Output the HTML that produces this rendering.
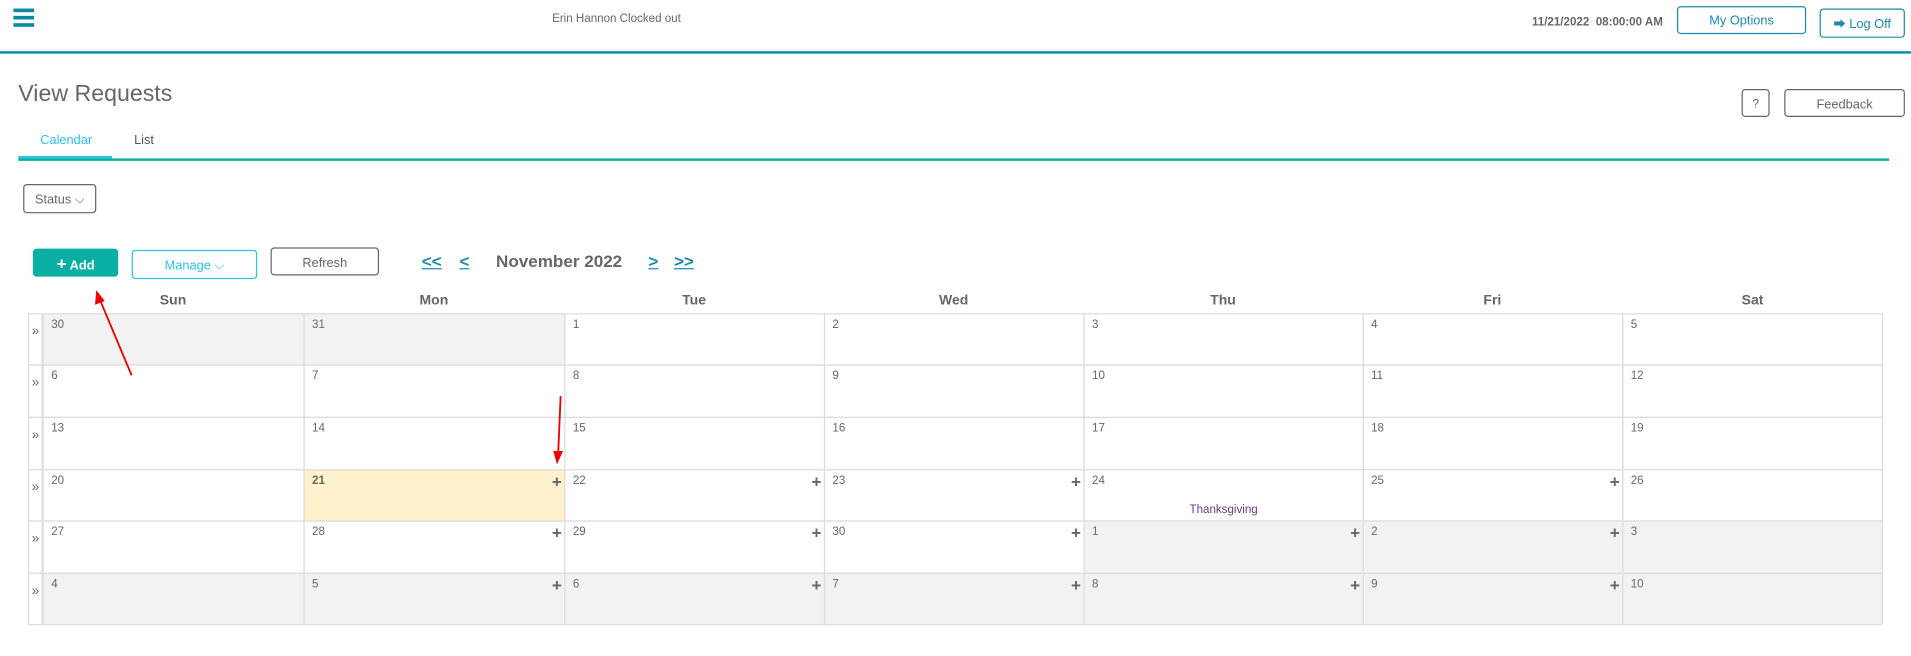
<!DOCTYPE html>
<html><head><meta charset="utf-8"><style>
html,body{margin:0;padding:0;background:#fff;overflow:hidden;width:1911px;height:656px}
#w{position:absolute;left:0;top:0;width:1568px;height:538px;transform:scale(1.21875);transform-origin:0 0;font-family:"Liberation Sans Narrow","Liberation Sans",sans-serif;color:#666}
.a{position:absolute}
.btn{position:absolute;box-sizing:border-box;border:1px solid #666;border-radius:3px;text-align:center;font-size:10.5px}
.c{position:absolute;box-sizing:border-box;border:1px solid #ddd;font-size:9.5px;color:#666;padding:3px 0 0 6px}
.g{background:#f2f2f2}
.p{position:absolute;right:2px;top:2px;font-weight:bold;font-size:14px;color:#666;line-height:14px}
.h{position:absolute;top:241px;font-weight:bold;font-size:11.5px;color:#666;text-align:center}
.r{position:absolute;left:23px;width:12px;box-sizing:border-box;border:1px solid #ddd;font-size:11px;padding-left:2px;color:#666}
.nav{position:absolute;top:206px;color:#1a8ab0;font-size:14px;font-weight:bold;text-decoration:underline}
</style></head><body><div id="w">
<div class="a" style="left:11px;top:7px;width:17px;height:2.5px;background:#0a8aa8"></div>
<div class="a" style="left:11px;top:13px;width:17px;height:2.5px;background:#0a8aa8"></div>
<div class="a" style="left:11px;top:19px;width:17px;height:2.5px;background:#0a8aa8"></div>
<div class="a" style="left:453px;top:10px;font-size:9.5px">Erin Hannon Clocked out</div>
<div class="a" style="left:1257px;top:13px;font-size:9.5px;font-weight:bold">11/21/2022&nbsp; 08:00:00 AM</div>
<div class="btn" style="left:1376px;top:5px;width:106px;height:23px;border-color:#1a8ab0;color:#1a8ab0;line-height:23px">My Options</div>
<div class="btn" style="left:1493px;top:7px;width:70px;height:24px;border-color:#1a8ab0;color:#1a8ab0;line-height:24px"><span style="font-size:10px">&#x2B95;</span> Log Off</div>
<div class="a" style="left:0;top:42px;width:1568px;height:2px;background:#0a8aa8"></div>
<div class="a" style="left:15px;top:67px;font-size:19px;color:#666">View Requests</div>
<div class="btn" style="left:1429px;top:73px;width:23px;height:23px;line-height:23px;font-size:10px">?</div>
<div class="btn" style="left:1464px;top:73px;width:99px;height:23px;line-height:25px">Feedback</div>
<div class="a" style="left:33px;top:109px;font-size:10.5px;color:#2bc4e8">Calendar</div>
<div class="a" style="left:110px;top:109px;font-size:10.5px;color:#555">List</div>
<div class="a" style="left:15px;top:128px;width:77px;height:2px;background:#2bc4e8"></div>
<div class="a" style="left:15px;top:130px;width:1535px;height:2px;background:#0aafa3"></div>
<div class="btn" style="left:19px;top:151px;width:60px;height:24px;line-height:24px;font-size:10.5px">Status &#x2335;</div>
<div class="btn" style="left:27px;top:204px;width:70px;height:23px;line-height:23px;background:#0aafa3;border-color:#0aafa3;color:#fff;font-weight:bold"><span style="font-size:14px">+</span> Add</div>
<div class="btn" style="left:108px;top:205px;width:103px;height:24px;line-height:25px;border-color:#2bc4e8;color:#2bc4e8">Manage &#x2335;</div>
<div class="btn" style="left:222px;top:203px;width:89px;height:23px;line-height:24px">Refresh</div>
<div class="nav" style="left:346px">&lt;&lt;</div>
<div class="nav" style="left:377px">&lt;</div>
<div class="a" style="left:407px;top:206px;font-size:14px;font-weight:bold;color:#666">November 2022</div>
<div class="nav" style="left:532px">&gt;</div>
<div class="nav" style="left:553px">&gt;&gt;</div>
<div class="h" style="left:35px;width:214px">Sun</div><div class="h" style="left:249px;width:214px">Mon</div><div class="h" style="left:463px;width:213px">Tue</div><div class="h" style="left:676px;width:213px">Wed</div><div class="h" style="left:889px;width:229px">Thu</div><div class="h" style="left:1118px;width:213px">Fri</div><div class="h" style="left:1331px;width:214px">Sat</div>

<div class="r" style="top:257px;height:43px;padding-top:8px">»</div>
<div class="r" style="top:299px;height:44px;padding-top:8px">»</div>
<div class="r" style="top:342px;height:44px;padding-top:8px">»</div>
<div class="r" style="top:385px;height:43px;padding-top:8px">»</div>
<div class="r" style="top:427px;height:44px;padding-top:8px">»</div>
<div class="r" style="top:470px;height:43px;padding-top:8px">»</div>

<div class="c g" style="left:35px;top:257px;width:215px;height:43px">30</div>
<div class="c g" style="left:249px;top:257px;width:215px;height:43px">31</div>
<div class="c" style="left:463px;top:257px;width:214px;height:43px">1</div>
<div class="c" style="left:676px;top:257px;width:214px;height:43px">2</div>
<div class="c" style="left:889px;top:257px;width:230px;height:43px">3</div>
<div class="c" style="left:1118px;top:257px;width:214px;height:43px">4</div>
<div class="c" style="left:1331px;top:257px;width:214px;height:43px">5</div>

<div class="c" style="left:35px;top:299px;width:215px;height:44px">6</div>
<div class="c" style="left:249px;top:299px;width:215px;height:44px">7</div>
<div class="c" style="left:463px;top:299px;width:214px;height:44px">8</div>
<div class="c" style="left:676px;top:299px;width:214px;height:44px">9</div>
<div class="c" style="left:889px;top:299px;width:230px;height:44px">10</div>
<div class="c" style="left:1118px;top:299px;width:214px;height:44px">11</div>
<div class="c" style="left:1331px;top:299px;width:214px;height:44px">12</div>

<div class="c" style="left:35px;top:342px;width:215px;height:44px">13</div>
<div class="c" style="left:249px;top:342px;width:215px;height:44px">14</div>
<div class="c" style="left:463px;top:342px;width:214px;height:44px">15</div>
<div class="c" style="left:676px;top:342px;width:214px;height:44px">16</div>
<div class="c" style="left:889px;top:342px;width:230px;height:44px">17</div>
<div class="c" style="left:1118px;top:342px;width:214px;height:44px">18</div>
<div class="c" style="left:1331px;top:342px;width:214px;height:44px">19</div>

<div class="c" style="left:35px;top:385px;width:215px;height:43px">20</div>
<div class="c" style="left:249px;top:385px;width:215px;height:43px;background:#fdf2cc;font-weight:bold">21<span class="p">+</span></div>
<div class="c" style="left:463px;top:385px;width:214px;height:43px">22<span class="p">+</span></div>
<div class="c" style="left:676px;top:385px;width:214px;height:43px">23<span class="p">+</span></div>
<div class="c" style="left:889px;top:385px;width:230px;height:43px">24<div style="position:absolute;left:0;width:228px;top:27px;text-align:center;color:#6a3a8a">Thanksgiving</div></div>
<div class="c" style="left:1118px;top:385px;width:214px;height:43px">25<span class="p">+</span></div>
<div class="c" style="left:1331px;top:385px;width:214px;height:43px">26</div>

<div class="c" style="left:35px;top:427px;width:215px;height:44px">27</div>
<div class="c" style="left:249px;top:427px;width:215px;height:44px">28<span class="p">+</span></div>
<div class="c" style="left:463px;top:427px;width:214px;height:44px">29<span class="p">+</span></div>
<div class="c" style="left:676px;top:427px;width:214px;height:44px">30<span class="p">+</span></div>
<div class="c g" style="left:889px;top:427px;width:230px;height:44px">1<span class="p">+</span></div>
<div class="c g" style="left:1118px;top:427px;width:214px;height:44px">2<span class="p">+</span></div>
<div class="c g" style="left:1331px;top:427px;width:214px;height:44px">3</div>

<div class="c g" style="left:35px;top:470px;width:215px;height:43px">4</div>
<div class="c g" style="left:249px;top:470px;width:215px;height:43px">5<span class="p">+</span></div>
<div class="c g" style="left:463px;top:470px;width:214px;height:43px">6<span class="p">+</span></div>
<div class="c g" style="left:676px;top:470px;width:214px;height:43px">7<span class="p">+</span></div>
<div class="c g" style="left:889px;top:470px;width:230px;height:43px">8<span class="p">+</span></div>
<div class="c g" style="left:1118px;top:470px;width:214px;height:43px">9<span class="p">+</span></div>
<div class="c g" style="left:1331px;top:470px;width:214px;height:43px">10</div>

<svg class="a" style="left:0;top:0" width="1568" height="538">
<line x1="108" y1="308" x2="82" y2="246" stroke="#e00" stroke-width="1.5"/>
<polygon points="79,238 78,250 86,247" fill="#e00"/>
<line x1="460" y1="325" x2="458" y2="372" stroke="#e00" stroke-width="1.5"/>
<polygon points="457,381 454,370 462,370" fill="#e00"/>
</svg>
</div></body></html>
